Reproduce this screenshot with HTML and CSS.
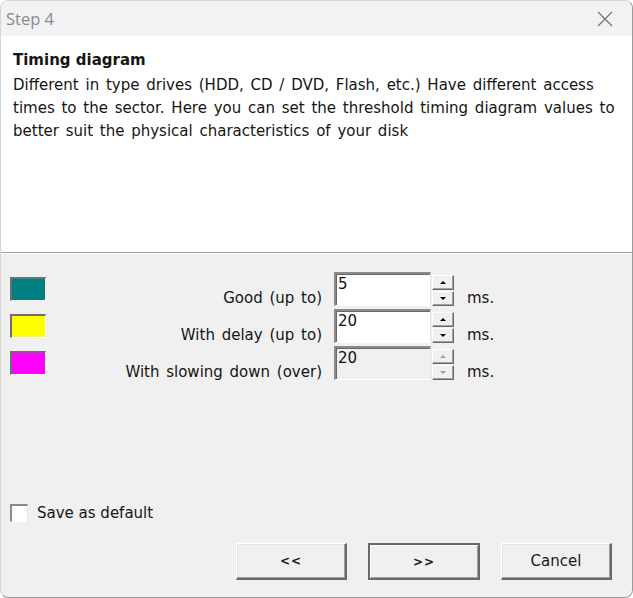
FILE: index.html
```html
<!DOCTYPE html>
<html lang="en">
<head>
<meta charset="utf-8">
<title>Step 4</title>
<link rel="stylesheet" href="styles.css">
</head>
<body>
<div class="window">
  <div class="titlebar">
    <span class="title">Step 4</span>
    <svg class="close" width="16" height="16" viewBox="0 0 16 16" aria-label="Close">
      <path d="M1 1 L15 15 M15 1 L1 15" stroke="#6e6e6e" stroke-width="1.1" fill="none"/>
    </svg>
  </div>

  <div class="header">
    <div class="header-title">Timing diagram</div>
    <p class="header-text">Different in type drives (HDD, CD / DVD, Flash, etc.) Have different access times to the sector. Here you can set the threshold timing diagram values to better suit the physical characteristics of your disk</p>
  </div>

  <div class="body">
    <div class="rows">
      <div class="row">
        <span class="swatch swatch-teal"></span>
        <span class="label">Good (up to)</span>
        <span class="edit">5</span>
        <span class="spin">
          <span class="spin-btn"><span class="arrow-up"></span></span>
          <span class="spin-btn"><span class="arrow-down"></span></span>
        </span>
        <span class="unit">ms.</span>
      </div>
      <div class="row">
        <span class="swatch swatch-yellow"></span>
        <span class="label">With delay (up to)</span>
        <span class="edit">20</span>
        <span class="spin">
          <span class="spin-btn"><span class="arrow-up"></span></span>
          <span class="spin-btn"><span class="arrow-down"></span></span>
        </span>
        <span class="unit">ms.</span>
      </div>
      <div class="row">
        <span class="swatch swatch-magenta"></span>
        <span class="label">With slowing down (over)</span>
        <span class="edit edit-disabled">20</span>
        <span class="spin spin-disabled">
          <span class="spin-btn"><span class="arrow-up"></span></span>
          <span class="spin-btn"><span class="arrow-down"></span></span>
        </span>
        <span class="unit">ms.</span>
      </div>
    </div>

    <label class="check">
      <span class="check-box"></span>
      <span class="check-label">Save as default</span>
    </label>

    <div class="buttons">
      <button class="btn btn-arrows" type="button">&lt;&lt;</button>
      <button class="btn btn-arrows btn-default" type="button">&gt;&gt;</button>
      <button class="btn" type="button">Cancel</button>
    </div>
  </div>
</div>
</body>
</html>
```

FILE: styles.css
```css
* {
  box-sizing: border-box;
}

html, body {
  margin: 0;
  padding: 0;
  background: #ffffff;
}

body {
  font-family: "DejaVu Sans", "Noto Sans", sans-serif;
  font-size: 15px;
  word-spacing: 2px;
  color: #151515;
}

.window {
  width: 633px;
  height: 598px;
  border: 1px solid #9b9b9b;
  border-left-color: #d6d6d6;
  border-top-color: #d6d6d6;
  border-radius: 8px;
  overflow: hidden;
  display: flex;
  flex-direction: column;
  background: #f0f0f0;
}

/* caption bar */
.titlebar {
  height: 35px;
  flex: none;
  background: #f1f2f4;
  display: flex;
  align-items: center;
  justify-content: space-between;
  padding: 0 19px 0 5px;
}

.title {
  font-family: "Open Sans", "Noto Sans", sans-serif;
  color: #8a8a8a;
  font-size: 16.5px;
  word-spacing: 0;
}

.close {
  display: block;
}

/* white description panel */
.header {
  height: 217px;
  flex: none;
  background: #ffffff;
  padding: 13px 4px 0 12px;
  border-bottom: 1px solid #a0a0a0;
  box-shadow: 0 1px 0 #ffffff;
}

.header-title {
  font-weight: 700;
  line-height: 23px;
  margin-bottom: 2px;
  word-spacing: 0;
}

.header-text {
  margin: 0;
  line-height: 23px;
}

/* grey form area */
.body {
  flex: 1;
  display: flex;
  flex-direction: column;
  padding: 0 0 17px 0;
}

.rows {
  display: flex;
  flex-direction: column;
  gap: 3px;
  padding: 19px 0 0 9px;
}

.row {
  display: flex;
  align-items: flex-end;
  height: 34px;
}

.swatch {
  width: 36px;
  height: 24px;
  align-self: center;
  border-style: solid;
  border-width: 2px 1px 1px 2px;
  border-color: #6f6f6f #f4f4f4 #ffffff #6f6f6f;
}

.swatch-teal { background: #008080; }
.swatch-yellow { background: #ffff00; }
.swatch-magenta { background: #ff00ff; }

.label {
  width: 276px;
  text-align: right;
  line-height: 16px;
}

.edit {
  width: 97px;
  height: 34px;
  margin-left: 12px;
  background: #ffffff;
  border-style: solid;
  border-width: 2px 1px 1px 2px;
  border-color: #8a8a8a #e3e3e3 #ffffff #8a8a8a;
  box-shadow: inset 1px 1px 0 #696969;
  padding: 0 0 0 2px;
  line-height: 20px;
  color: #101010;
}

.edit-disabled {
  background: #f0f0f0;
}

.spin {
  display: flex;
  flex-direction: column;
  gap: 1px;
  margin-left: 1px;
  padding-top: 2px;
}

.spin-btn {
  width: 22px;
  height: 15px;
  display: flex;
  align-items: center;
  justify-content: center;
  background: #f0f0f0;
  border-style: solid;
  border-width: 1px;
  border-color: #ffffff #696969 #696969 #ffffff;
  box-shadow: inset -1px -1px 0 #a0a0a0;
}

.arrow-up,
.arrow-down {
  width: 0;
  height: 0;
  border-left: 3px solid transparent;
  border-right: 3px solid transparent;
}

.arrow-up {
  border-bottom: 3px solid #000000;
}

.arrow-down {
  border-top: 3px solid #000000;
}

.spin-disabled .arrow-up {
  border-bottom-color: #a0a0a0;
}

.spin-disabled .arrow-down {
  border-top-color: #a0a0a0;
}

.unit {
  margin-left: 13px;
  line-height: 16px;
}

/* checkbox */
.check {
  display: flex;
  align-items: center;
  margin: auto 0 0 9px;
  gap: 9px;
}

.check-box {
  width: 18px;
  height: 18px;
  background: #ffffff;
  border-style: solid;
  border-width: 2px 1px 1px 2px;
  border-color: #8a8a8a #e3e3e3 #ffffff #8a8a8a;
}

.check-label {
  line-height: 20px;
  word-spacing: 0;
}

/* dialog buttons */
.buttons {
  display: flex;
  justify-content: flex-end;
  gap: 21px;
  margin-top: 20px;
  padding-right: 20px;
}

.btn {
  width: 111px;
  height: 37px;
  font-family: inherit;
  font-size: 15px;
  color: #1a1a1a;
  background: #f0f0f0;
  border-style: solid;
  border-width: 1px 2px 2px 1px;
  border-color: #ffffff #696969 #696969 #ffffff;
  box-shadow: inset -1px -1px 0 #a0a0a0, inset 1px 1px 0 #e3e3e3;
  padding: 0;
}

.btn-arrows {
  font-size: 12px;
  font-weight: 700;
  letter-spacing: 1px;
}

.btn-default {
  width: 112px;
  border: 2px solid #696969;
  box-shadow: inset 1px 1px 0 #ffffff, inset -1px -1px 0 #a0a0a0;
}
```
